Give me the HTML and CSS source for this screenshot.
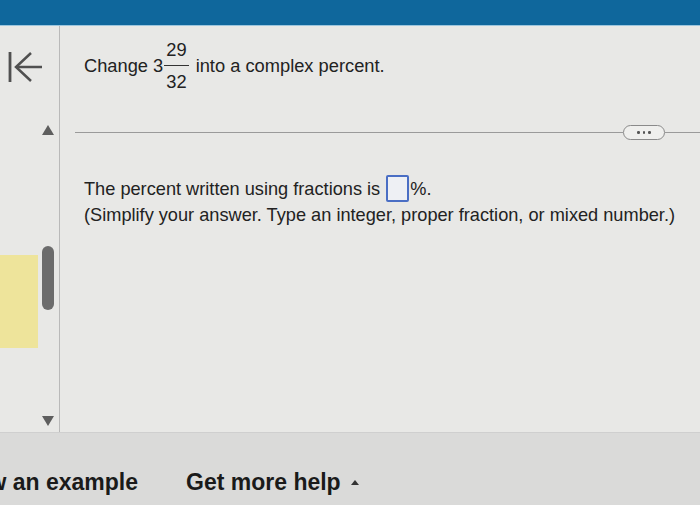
FILE: index.html
```html
<!DOCTYPE html>
<html>
<head>
<meta charset="utf-8">
<link rel="stylesheet" href="styles.css">
</head>
<body>
<div class="topbar"></div>
<div class="main">
  <aside class="sidebar">
    <div class="back">
      <svg width="36" height="32" viewBox="0 0 36 32">
        <line x1="3" y1="1" x2="3" y2="31" stroke="#505050" stroke-width="2.8"/>
        <line x1="9" y1="16" x2="35" y2="16" stroke="#505050" stroke-width="2.5"/>
        <polyline points="24,2 9,16 24,30" fill="none" stroke="#505050" stroke-width="2.5"/>
      </svg>
    </div>
    <div class="scroll">
      <div class="yellow"></div>
      <div class="scrollbar">
        <div class="arrow-up"></div>
        <div class="thumb"></div>
        <div class="arrow-down"></div>
      </div>
    </div>
  </aside>
  <section class="content">
    <div class="question">
      <span>Change 3</span>
      <span class="frac"><span class="num">29</span><span class="den">32</span></span>
      <span>into a complex percent.</span>
    </div>
    <div class="divider">
      <div class="rule"></div>
      <div class="pill"><span></span><span></span><span></span></div>
      <div class="rule tail"></div>
    </div>
    <div class="answer">
      <p>The percent written using fractions is <span class="box"></span>%.</p>
      <p>(Simplify your answer. Type an integer, proper fraction, or mixed number.)</p>
    </div>
  </section>
</div>
<footer class="bottombar">
  <span class="link example">Show an example</span>
  <span class="link help">Get more help <span class="caret"></span></span>
</footer>
</body>
</html>
```
FILE: styles.css
```css
html, body {
  margin: 0;
  padding: 0;
}
body {
  width: 700px;
  height: 505px;
  overflow: hidden;
  background: #e8e8e6;
  font-family: "Liberation Sans", Arial, sans-serif;
  color: #222;
  display: flex;
  flex-direction: column;
}
.topbar {
  height: 25px;
  background: #0f679c;
  border-bottom: 1px solid #9cc6de;
  flex: none;
}
.main {
  display: flex;
  height: 406px;
  flex: none;
}
.sidebar {
  width: 59px;
  border-right: 1px solid #b9b9b9;
  display: flex;
  flex-direction: column;
  flex: none;
}
.back {
  margin-top: 25px;
  margin-left: 7px;
  height: 32px;
}
.back svg {
  display: block;
}
.scroll {
  margin-top: 42px;
  display: flex;
  flex: 1;
  padding-bottom: 6px;
}
.yellow {
  width: 38px;
  height: 93px;
  margin-top: 130px;
  background: #eee49b;
}
.scrollbar {
  margin-left: 3px;
  width: 14px;
  display: flex;
  flex-direction: column;
  align-items: center;
}
.arrow-up {
  width: 0;
  height: 0;
  border-left: 6.5px solid transparent;
  border-right: 6.5px solid transparent;
  border-bottom: 10px solid #5e5e5e;
}
.thumb {
  margin-top: 111px;
  width: 12px;
  height: 64px;
  border-radius: 6px;
  background: #6c6c6c;
}
.arrow-down {
  margin-top: auto;
  width: 0;
  height: 0;
  border-left: 6.5px solid transparent;
  border-right: 6.5px solid transparent;
  border-top: 10px solid #5e5e5e;
}
.content {
  flex: 1;
  padding-left: 24px;
  display: flex;
  flex-direction: column;
}
.question {
  margin-top: 15px;
  display: flex;
  align-items: center;
  font-size: 18.3px;
  color: #222;
}
.frac {
  display: inline-flex;
  flex-direction: column;
  align-items: center;
  margin: 0 7px 0 1px;
  line-height: 17px;
}
.num {
  padding: 0 2px 7px;
  border-bottom: 1.5px solid #333;
}
.den {
  padding-top: 7px;
}
.divider {
  margin-top: 35px;
  margin-left: -9px;
  display: flex;
  align-items: center;
}
.rule {
  flex: 1;
  height: 1px;
  background: #9a9a9a;
}
.rule.tail {
  flex: none;
  width: 35px;
}
.pill {
  width: 40px;
  height: 13px;
  border: 1.5px solid #8a8a8a;
  border-radius: 8px;
  background: #efefed;
  display: flex;
  justify-content: center;
  align-items: center;
  gap: 3px;
}
.pill span {
  width: 2.5px;
  height: 2.5px;
  background: #555;
  border-radius: 50%;
}
.answer {
  margin-top: 35px;
  font-size: 18.2px;
  line-height: 26px;
  color: #222;
}
.answer p {
  margin: 0;
}
.box {
  display: inline-block;
  width: 19px;
  height: 23px;
  border: 2px solid #4a6ec4;
  border-radius: 2px;
  background: #eef0f4;
  vertical-align: -7px;
  margin: 0 1px;
}
.bottombar {
  flex: 1;
  background: #dadad9;
  border-top: 1px solid #cfcfcf;
  display: flex;
  align-items: flex-start;
  padding-top: 36px;
  gap: 48px;
}
.link {
  font-size: 23px;
  font-weight: bold;
  color: #1a1a1a;
  line-height: 26px;
}
.example {
  margin-left: -55px;
}
.caret {
  display: inline-block;
  width: 0;
  height: 0;
  border-left: 4px solid transparent;
  border-right: 4px solid transparent;
  border-bottom: 5px solid #333;
  vertical-align: 5px;
  margin-left: 4px;
}
```
